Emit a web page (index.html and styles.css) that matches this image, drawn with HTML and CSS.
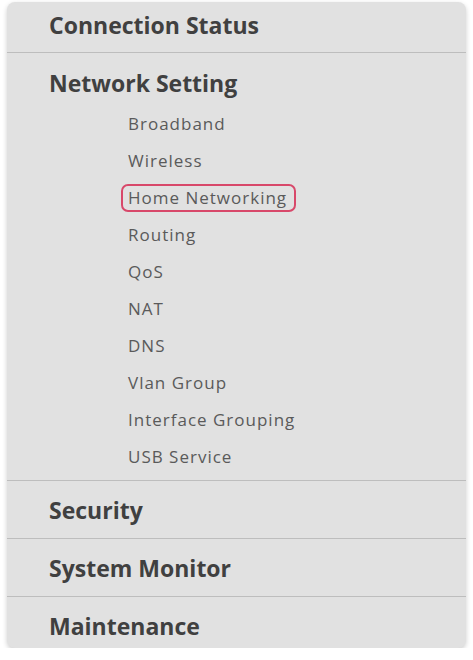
FILE: index.html
```html
<!DOCTYPE html>
<html lang="en">
<head>
<meta charset="utf-8">
<title>Menu</title>
<link rel="stylesheet" href="styles.css">
</head>
<body>
<nav class="panel">
  <section class="group group-first">
    <h2 class="group-title">Connection Status</h2>
  </section>
  <section class="group group-open">
    <h2 class="group-title">Network Setting</h2>
    <ul class="sub-list">
      <li class="sub-item">Broadband</li>
      <li class="sub-item">Wireless</li>
      <li class="sub-item"><span class="sub-active">Home Networking</span></li>
      <li class="sub-item">Routing</li>
      <li class="sub-item">QoS</li>
      <li class="sub-item">NAT</li>
      <li class="sub-item">DNS</li>
      <li class="sub-item">Vlan Group</li>
      <li class="sub-item">Interface Grouping</li>
      <li class="sub-item">USB Service</li>
    </ul>
  </section>
  <section class="group">
    <h2 class="group-title">Security</h2>
  </section>
  <section class="group">
    <h2 class="group-title">System Monitor</h2>
  </section>
  <section class="group group-last">
    <h2 class="group-title">Maintenance</h2>
  </section>
</nav>
</body>
</html>
```
FILE: styles.css
```css
html, body {
  margin: 0;
  padding: 0;
  background: #ffffff;
}

body {
  font-family: "Open Sans", "Liberation Sans", sans-serif;
}

.panel {
  margin: 2px 7px 0 7px;
  width: 459px;
  background: #e1e1e1;
  border-radius: 8px;
  box-shadow: 0 2px 5px rgba(0, 0, 0, 0.2);
  overflow: hidden;
}

.group {
  border-top: 1px solid #bdbdbd;
  padding: 14px 0 13px 0;
}

.group-first {
  border-top: none;
  padding: 8px 0 12px 0;
}

.group-open {
  padding: 15px 0 5px 0;
}

.group-last {
  padding-bottom: 7px;
}

.group-title {
  margin: 0;
  padding-left: 42px;
  font-size: 23px;
  font-weight: 700;
  line-height: 30px;
  letter-spacing: 0;
  color: #404040;
}

.sub-list {
  list-style: none;
  margin: 7px 0 0 0;
  padding: 0 0 0 121px;
}

.sub-item {
  height: 37px;
  line-height: 37px;
  font-size: 17px;
  letter-spacing: 1px;
  color: #5a5a5a;
}

.sub-active {
  display: inline-block;
  margin-left: -7px;
  padding: 0 7px 0 5px;
  height: 24px;
  line-height: 24px;
  border: 2px solid #d8486a;
  border-radius: 7px;
  vertical-align: middle;
  position: relative;
  top: -1px;
}
```
